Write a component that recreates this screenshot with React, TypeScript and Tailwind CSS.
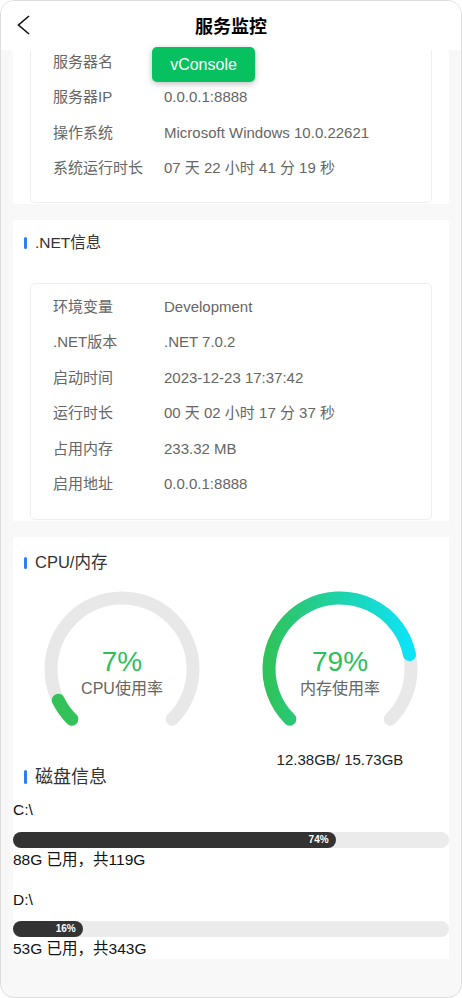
import React from "react";

const FONT = { fontFamily: '"Liberation Sans", Arial, "Noto Sans CJK SC", sans-serif' };

const serverRows = [
  { label: "服务器名", value: "" },
  { label: "服务器IP", value: "0.0.0.1:8888" },
  { label: "操作系统", value: "Microsoft Windows 10.0.22621" },
  { label: "系统运行时长", value: "07 天 22 小时 41 分 19 秒" },
];

const netRows = [
  { label: "环境变量", value: "Development" },
  { label: ".NET版本", value: ".NET 7.0.2" },
  { label: "启动时间", value: "2023-12-23 17:37:42" },
  { label: "运行时长", value: "00 天 02 小时 17 分 37 秒" },
  { label: "占用内存", value: "233.32 MB" },
  { label: "启用地址", value: "0.0.0.1:8888" },
];

const disks = [
  { name: "C:\\", percent: 74, text: "88G 已用，共119G" },
  { name: "D:\\", percent: 16, text: "53G 已用，共343G" },
];

function InfoRows({ rows }: { rows: { label: string; value: string }[] }) {
  return (
    <>
      {rows.map((r) => (
        <div key={r.label} className="flex h-[35.5px] items-center text-[15px] text-[#666]">
          <span className="w-[111px] shrink-0">{r.label}</span>
          <span>{r.value}</span>
        </div>
      ))}
    </>
  );
}

function SectionTitle({ children, size }: { children: React.ReactNode; size: "sm" | "md" | "lg" }) {
  const text = size === "lg" ? "text-[18px]" : size === "md" ? "text-[16.5px]" : "text-[15.5px]";
  return (
    <div className={`flex items-center pl-[11px] ${size === "lg" ? "h-[18px]" : "h-[21px]"}`}>
      <span className={`w-[3px] rounded-full bg-[#2f7cf6] ${size === "lg" ? "h-[14px]" : "h-[12px]"}`} />
      <span className={`ml-[8px] text-[#333] ${text}`}>{children}</span>
    </div>
  );
}

// point on gauge circle, angle in degrees clockwise from top
function pt(a: number, r: number) {
  const rad = (a * Math.PI) / 180;
  return [80 + r * Math.sin(rad), 80 - r * Math.cos(rad)];
}

function arc(from: number, to: number, r: number) {
  const [x1, y1] = pt(from, r);
  const [x2, y2] = pt(to, r);
  const large = to - from > 180 ? 1 : 0;
  return `M ${x1} ${y1} A ${r} ${r} 0 ${large} 1 ${x2} ${y2}`;
}

function Gauge({ percent, label, id, gradient }: { percent: number; label: string; id: string; gradient?: boolean }) {
  const end = 225 + (270 * percent) / 100;
  return (
    <div className="relative h-[160px] w-[160px]">
      <svg width="160" height="160" viewBox="0 0 160 160">
        <defs>
          <linearGradient id={id} x1="0" y1="0" x2="1" y2="0">
            <stop offset="0%" stopColor="#2fc35c" />
            <stop offset="100%" stopColor="#0de3f7" />
          </linearGradient>
        </defs>
        <path d={arc(225, 495, 71)} fill="none" stroke="#e8e8e8" strokeWidth="13" strokeLinecap="round" />
        <path
          d={arc(225, end, 71)}
          fill="none"
          stroke={gradient ? `url(#${id})` : "#33c15a"}
          strokeWidth="13"
          strokeLinecap="round"
        />
      </svg>
      <div className="absolute inset-0 flex flex-col items-center pt-[57px]">
        <span className="text-[28px] leading-[32px] text-[#2fbf5d]">{percent}%</span>
        <span className="mt-[1px] text-[16px] leading-[20px] text-[#666]">{label}</span>
      </div>
    </div>
  );
}

export default function App() {
  return (
    <div style={FONT} className="flex h-[998px] w-[462px] flex-col overflow-hidden rounded-[14px] border border-[#dedede] bg-[#f8f8f8]">
      {/* header */}
      <div className="relative flex h-[49px] shrink-0 items-center justify-center bg-white">
        <svg className="absolute left-[16px] top-[14px]" width="14" height="20" viewBox="0 0 14 20">
          <polyline points="12,1 1.5,10 12,19" fill="none" stroke="#111" strokeWidth="1.6" />
        </svg>
        <span className="mt-[4px] text-[18px] font-bold text-black">服务监控</span>
        <div className="absolute left-[151px] top-[46px] z-10 flex h-[35px] w-[103px] items-center justify-center rounded-[5px] bg-[#07c160] text-[16px] text-white shadow-[0_2px_6px_rgba(0,0,0,0.25)]">
          vConsole
        </div>
      </div>

      {/* server info (scrolled) */}
      <div className="mx-[12px] bg-white px-[17px] pb-px">
        <div className="-mt-[6px] rounded-b-[5px] border-x border-b border-[#efefef] px-[22px] pb-[16px]">
          <InfoRows rows={serverRows} />
        </div>
      </div>

      {/* .NET info */}
      <div className="mx-[12px] mt-[16px] bg-white px-[17px] pb-px pt-[12px]">
        <div className="-mx-[17px]">
          <SectionTitle size="sm">.NET信息</SectionTitle>
        </div>
        <div className="mt-[30px] rounded-[5px] border border-[#efefef] px-[22px] pb-[17px] pt-[5px]">
          <InfoRows rows={netRows} />
        </div>
      </div>

      {/* cpu / memory / disk */}
      <div className="mx-[12px] mt-[16px] bg-white pb-px pt-[15px]">
        <SectionTitle size="md">CPU/内存</SectionTitle>
        <div className="mt-[16px] grid grid-cols-2">
          <div className="flex justify-center">
            <Gauge percent={7} label="CPU使用率" id="g1" />
          </div>
          <div className="flex flex-col items-center">
            <Gauge percent={79} label="内存使用率" id="g2" gradient />
            <span className="mt-[2px] text-[15px] leading-[17px] text-[#222]">12.38GB/ 15.73GB</span>
          </div>
        </div>
        <SectionTitle size="lg">磁盘信息</SectionTitle>
        <div className="mt-[14px] flex flex-col gap-[21px]">
          {disks.map((d) => (
            <div key={d.name} className="flex flex-col text-[15.5px] text-[#111]">
              <span className="leading-[20px]">{d.name}</span>
              <div className="mt-[11.5px] h-[16px] w-full rounded-full bg-[#ebebeb]">
                <div
                  className="flex h-full items-center justify-end rounded-full bg-[#333] pr-[7px]"
                  style={{ width: `${d.percent}%` }}
                >
                  <span className="text-[10px] font-bold leading-none text-white">{d.percent}%</span>
                </div>
              </div>
              <span className="mt-[3px] leading-[18px]">{d.text}</span>
            </div>
          ))}
        </div>
      </div>
    </div>
  );
}
